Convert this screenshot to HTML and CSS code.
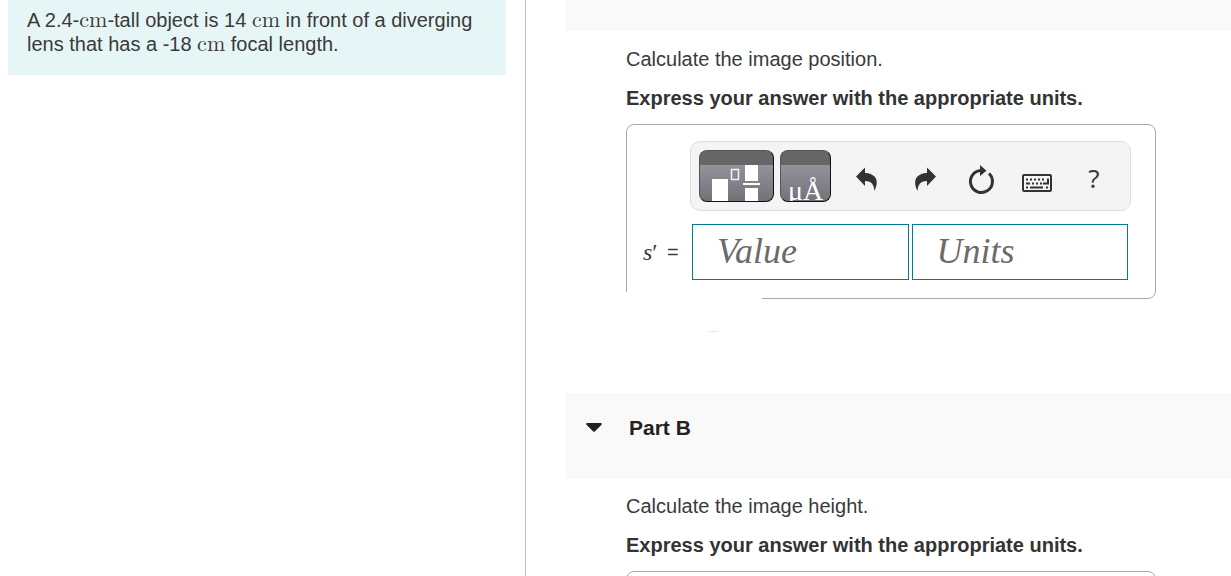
FILE: index.html
```html
<!DOCTYPE html>
<html lang="en">
<head>
<meta charset="utf-8">
<meta name="viewport" content="width=device-width, initial-scale=1">
<title>Diverging lens</title>
<link rel="stylesheet" href="styles.css">
</head>
<body>
<main class="page">
  <aside class="problem">
    <p class="problem-text">A 2.4-<span class="unit">cm</span>-tall object is 14 <span class="unit">cm</span> in front of a diverging lens that has a -18 <span class="unit">cm</span> focal length.</p>
  </aside>
  <div class="parts">
    <section class="part">
      <div class="part-strip"></div>
      <div class="part-body">
        <p class="prompt">Calculate the image position.</p>
        <p class="instruction">Express your answer with the appropriate units.</p>
        <form class="answer">
          <div class="toolbar">
            <button class="tool tool-template" type="button" aria-label="Templates">
              <svg width="73" height="50" viewBox="0 0 73 50">
                <path fill="#fff" d="M12 28h16v22H12zM45 14h13v16H45zM43 32h17v2H43zM45 37h13v13H45z"/>
                <path fill="none" stroke="#f4f2f6" stroke-width="1.500" d="M31.500 18.500h7v10h-7z"/>
              </svg>
            </button>
            <button class="tool tool-units" type="button" aria-label="Units symbols"><span class="tool-glyph">μÅ</span></button>
            <div class="actions">
              <button class="action" type="button" aria-label="Undo">
                <svg width="32" height="32" viewBox="0 0 32 32"><path fill="#333" d="M5 12.500 14 3.500v5.400c9 .3 15.500 6 9.400 18C22.800 20 20 17.200 14 17.100V22z"/></svg>
              </button>
              <button class="action" type="button" aria-label="Redo">
                <svg width="32" height="32" viewBox="0 0 32 32"><path fill="#333" d="M28 12.500 19 3.500v5.400c-9 .3-15.500 6-9.400 18C10.200 20 13 17.200 19 17.100V22z"/></svg>
              </button>
              <button class="action" type="button" aria-label="Reset">
                <svg width="32" height="32" viewBox="0 0 32 32"><path fill="none" stroke="#333" stroke-width="3" d="M16 6.500A11 11 0 1 0 24 9.500"/><path fill="#333" d="M15 1 21.500 6.700 15 12z"/></svg>
              </button>
              <button class="action" type="button" aria-label="Keyboard shortcuts">
                <svg width="32" height="32" viewBox="0 0 32 32"><rect x="2" y="11" width="28" height="16" rx="1" fill="none" stroke="#333" stroke-width="2"/><path fill="none" stroke="#333" stroke-width="2" d="M5 15.500h2m2 0h2m2 0h2m2 0h2m2 0h2M5 19.500h4m2 0h2m2 0h2m2 0h2m1 0h5v-5M5 23.500h2m2 0h13m3 0h2"/></svg>
              </button>
              <button class="action help" type="button" aria-label="Help">?</button>
            </div>
          </div>
          <div class="equation">
            <span class="symbol"><i>s</i>′</span>
            <span class="equals">=</span>
            <div class="fields">
              <input class="field" type="text" placeholder="Value" aria-label="Value">
              <input class="field" type="text" placeholder="Units" aria-label="Units">
            </div>
          </div>
          <div class="blank"><span class="trace"></span></div>
        </form>
      </div>
    </section>
    <section class="part">
      <button class="part-header" type="button" aria-expanded="true">
        <svg width="16" height="10" viewBox="0 0 16 10"><path fill="#222" d="M1.500 0h13c1.400 0 1.700 1 .8 1.900L9 8.300c-.7.700-1.300.7-2 0L.7 1.900C-.2 1 .1 0 1.500 0z"/></svg>
        <span class="part-title">Part B</span>
      </button>
      <div class="part-body">
        <p class="prompt">Calculate the image height.</p>
        <p class="instruction">Express your answer with the appropriate units.</p>
        <div class="answer answer-next"></div>
      </div>
    </section>
  </div>
</main>
</body>
</html>
```
FILE: styles.css
```css
* { box-sizing: border-box; }

body {
  margin: 0;
  background: #fff;
  color: #3a3a3a;
  font: 20px/24px "Liberation Sans", Arial, sans-serif;
}

p { margin: 0; }

button {
  padding: 0;
  border: 0;
  background: none;
  color: inherit;
  font: inherit;
}

svg { display: block; }

.page {
  display: grid;
  grid-template-columns: minmax(0, 526fr) minmax(0, 705fr);
  height: 100vh;
  overflow: hidden;
}

.problem {
  padding: 0 19px 0 8px;
  border-right: 1px solid #b9c3d6;
}

.problem-text {
  padding: 8px 19px 19px;
  background: #e6f6f6;
}

.unit {
  font-family: "Latin Modern Roman", "DejaVu Serif", serif;
  font-size: 22px;
  line-height: 20px;
}

.parts { padding-left: 39px; }

.part-strip {
  height: 31px;
  background: #f9f9f9;
}

.part-body { padding: 16px 75px 0 61px; }

.instruction {
  margin-top: 15px;
  color: #333;
  font-weight: bold;
}

.answer {
  position: relative;
  margin-top: 14px;
  padding: 16px 24px 18px 16px;
  border: 1px solid #a8a8a8;
  border-radius: 8px;
}

.answer-next { height: 175px; }

.toolbar {
  display: flex;
  gap: 6px;
  margin-left: 47px;
  padding: 8px;
  border: 1px solid #ddd;
  border-radius: 10px;
  background: #f4f4f4;
}

.tool {
  height: 52px;
  overflow: hidden;
  border: 1px solid #111;
  border-top-color: #555;
  border-left-color: #555;
  border-radius: 8px;
  background: linear-gradient(#666 0 14px, #93919a 14px, #747279);
  color: #fff;
}

.tool-template { width: 75px; }

.tool-units { width: 51px; }

.tool-glyph {
  display: block;
  padding-top: 22px;
  font: 28px/36px "Liberation Serif", serif;
}

.actions {
  display: flex;
  flex: 1;
  align-items: center;
  justify-content: space-between;
  padding: 8px 12px 0 14px;
}

.action {
  width: 32px;
  height: 32px;
}

.help {
  padding-bottom: 4px;
  font: 26px/28px "Noto Sans", sans-serif;
}

.equation {
  display: flex;
  align-items: center;
  margin-top: 13px;
}

.symbol {
  flex: none;
  width: 24px;
  font: 24px/24px "Liberation Serif", serif;
}

.equals {
  flex: none;
  width: 25px;
  font-size: 20px;
}

.fields {
  display: flex;
  flex: 1;
  gap: 3px;
  min-width: 0;
  margin-right: 3px;
}

.field {
  flex: 1;
  min-width: 0;
  height: 56px;
  padding: 0 24px 2px;
  border: 1px solid #007c99;
  background: #fff;
  color: #333;
  font: italic 36px/40px "Liberation Serif", "Times New Roman", serif;
}

.field::placeholder {
  color: #6b6b6b;
  opacity: 1;
}

.blank {
  position: absolute;
  top: 167px;
  left: -1px;
  width: 136px;
  height: 41px;
  padding: 39px 0 0 83px;
  background: #fff;
}

.trace {
  display: block;
  width: 9px;
  height: 1px;
  background: #d9eef3;
}

.part-header {
  display: flex;
  align-items: center;
  gap: 27px;
  width: 100%;
  margin-top: 94px;
  padding: 23px 21px 38px;
  background: #f9f9f9;
  color: #222;
  text-align: left;
}

.part-title {
  font-size: 21px;
  font-weight: bold;
}
```
